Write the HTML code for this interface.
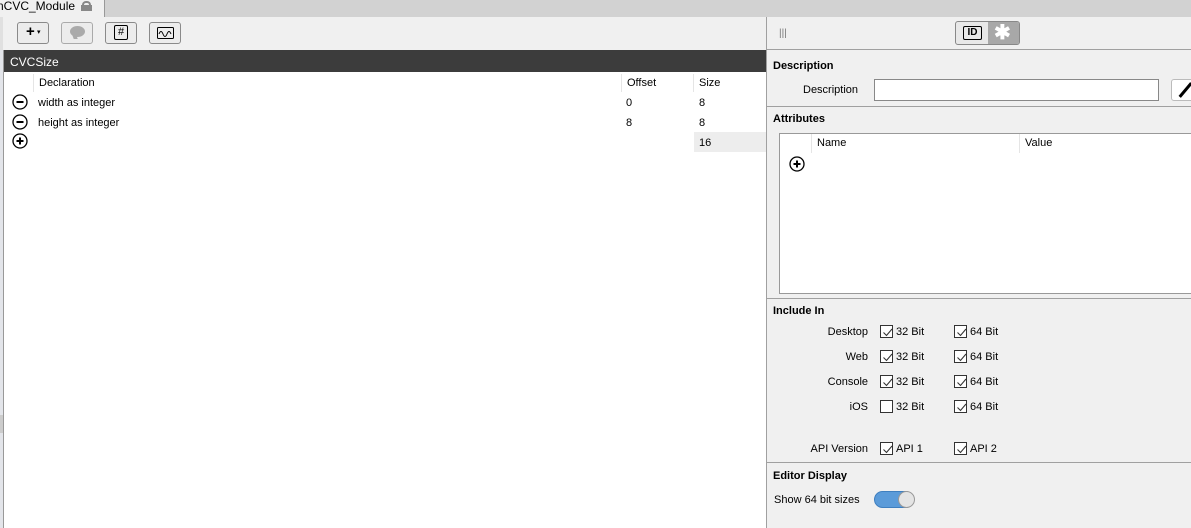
<!DOCTYPE html>
<html><head><meta charset="utf-8"><style>
*{box-sizing:border-box;margin:0;padding:0}
body{width:1191px;height:528px;overflow:hidden;background:#f0f0f0;font-family:"Liberation Sans",sans-serif;font-size:11px;line-height:15px;color:#000;position:relative}
.a{position:absolute}
.btn{position:absolute;top:22px;height:22px;border:1px solid #8a8a8a;border-radius:3px;background:#ececec}
.cb{position:absolute;width:13px;height:13px;border:1px solid #333;background:#fff}
.cb svg{position:absolute;left:1px;top:1px}
.lbl{position:absolute;text-align:right;width:100px}
.b{font-weight:bold}
</style></head><body>
<div class="a" style="left:0;top:0;width:1191px;height:17px;background:#d2d2d2"></div>
<div class="a" style="left:0;top:0;width:105px;height:17px;background:#f0f0f0;border-right:1px solid #999"></div>
<div class="a" style="left:-3px;top:0;font-size:12px;line-height:13px">nCVC_Module</div>
<div class="a" style="left:82px;top:1px;width:9px;height:5px;border:2px solid #888;border-bottom:none;border-radius:4px 4px 0 0"></div>
<div class="a" style="left:81px;top:5px;width:11px;height:6px;background:#888"></div>
<div class="a" style="left:0;top:17px;width:3px;height:33px;background:#e0e0e0"></div>
<div class="btn" style="left:17px;width:32px"><span class="a b" style="left:8px;top:1px;font-size:15px">+</span><span class="a" style="left:19px;top:2px;font-size:7px">▾</span></div>
<div class="btn" style="left:61px;width:32px;border-color:#aaa"><div class="a" style="left:8px;top:3px;width:15px;height:11px;border-radius:50%;background:#aaa"></div><div class="a" style="left:11px;top:12px;width:4px;height:4px;background:#aaa;transform:skewX(20deg)"></div></div>
<div class="btn" style="left:105px;width:32px"><div class="a" style="left:8px;top:2px;width:14px;height:15px;border:1.5px solid #000;border-radius:2px;font-size:11px;line-height:12px;text-align:center">#</div></div>
<div class="btn" style="left:149px;width:32px"><svg class="a" style="left:7px;top:4px" width="17" height="12"><rect x="0.5" y="0.5" width="16" height="11" fill="none" stroke="#000" rx="1"/><path d="M2 7 Q4 2 6 7 T10 7 T14 7" fill="none" stroke="#000"/></svg></div>
<div class="a" style="left:0;top:50px;width:4px;height:478px;background:#e3e5ea;border-right:1px solid #999"></div>
<div class="a" style="left:0;top:415px;width:3px;height:18px;background:#ccc"></div>
<div class="a" style="left:4px;top:50px;width:762px;height:478px;background:#fff"></div>
<div class="a" style="left:4px;top:50px;width:762px;height:23px;background:#3c3c3c;color:#fff;font-size:12px;line-height:25px;padding-left:6px">CVCSize</div>
<div class="a" style="left:4px;top:72px;width:762px;height:1px;background:#fff"></div>
<div class="a" style="left:33px;top:74px;width:1px;height:18px;background:#e5e5e5"></div>
<div class="a" style="left:621px;top:74px;width:1px;height:18px;background:#e5e5e5"></div>
<div class="a" style="left:693px;top:74px;width:1px;height:18px;background:#e5e5e5"></div>
<div class="a" style="left:39px;top:76px">Declaration</div>
<div class="a" style="left:627px;top:76px">Offset</div>
<div class="a" style="left:699px;top:76px">Size</div>
<svg class="a" style="left:12px;top:94px" width="16" height="16"><circle cx="8" cy="8" r="7" fill="none" stroke="#000" stroke-width="1.3"/><path d="M4.5 8H11.5" stroke="#000" stroke-width="2"/></svg>
<svg class="a" style="left:12px;top:114px" width="16" height="16"><circle cx="8" cy="8" r="7" fill="none" stroke="#000" stroke-width="1.3"/><path d="M4.5 8H11.5" stroke="#000" stroke-width="2"/></svg>
<svg class="a" style="left:12px;top:133px" width="16" height="16"><circle cx="8" cy="8" r="7" fill="none" stroke="#000" stroke-width="1.3"/><path d="M4.5 8H11.5M8 4.5V11.5" stroke="#000" stroke-width="2"/></svg>
<div class="a" style="left:38px;top:96px">width as integer</div>
<div class="a" style="left:38px;top:116px">height as integer</div>
<div class="a" style="left:626px;top:96px">0</div><div class="a" style="left:699px;top:96px">8</div>
<div class="a" style="left:626px;top:116px">8</div><div class="a" style="left:699px;top:116px">8</div>
<div class="a" style="left:694px;top:132px;width:72px;height:20px;background:#ededed"></div>
<div class="a" style="left:699px;top:136px">16</div>
<div class="a" style="left:766px;top:17px;width:1px;height:511px;background:#a0a0a0"></div>
<div class="a" style="left:767px;top:49px;width:424px;height:1px;background:#a0a0a0"></div>
<div class="a" style="left:779px;top:26px;color:#777;font-size:10px">|||</div>
<div class="a" style="left:955px;top:21px;width:65px;height:24px;border:1px solid #888;border-radius:3px;background:#e8e8e8;overflow:hidden">
<div class="a" style="left:32px;top:0;width:33px;height:24px;background:#a8a8a8"></div>
<div class="a b" style="left:7px;top:4px;width:19px;height:14px;border:1.5px solid #000;border-radius:2px;font-size:10px;line-height:11px;text-align:center">ID</div>
<div class="a b" style="left:38px;top:1px;color:#fff;font-size:20px;line-height:20px">✱</div></div>
<div class="a b" style="left:773px;top:59px">Description</div>
<div class="a" style="left:803px;top:83px">Description</div>
<div class="a" style="left:874px;top:79px;width:285px;height:22px;border:1px solid #888;background:#fff"></div>
<div class="a" style="left:1171px;top:79px;width:30px;height:22px;border:1px solid #bbb;border-radius:3px;background:#fff"></div>
<div class="a" style="left:1184px;top:81px;width:3px;height:18px;background:#000;transform:rotate(40deg)"></div>
<div class="a" style="left:767px;top:106px;width:424px;height:1px;background:#a0a0a0"></div>
<div class="a b" style="left:773px;top:112px">Attributes</div>
<div class="a" style="left:779px;top:133px;width:420px;height:161px;border:1px solid #999;background:#fff"></div>
<div class="a" style="left:811px;top:134px;width:1px;height:19px;background:#e5e5e5"></div>
<div class="a" style="left:1019px;top:134px;width:1px;height:19px;background:#e5e5e5"></div>
<div class="a" style="left:817px;top:136px">Name</div>
<div class="a" style="left:1025px;top:136px">Value</div>
<svg class="a" style="left:789px;top:156px" width="16" height="16"><circle cx="8" cy="8" r="7" fill="none" stroke="#000" stroke-width="1.3"/><path d="M4.5 8H11.5M8 4.5V11.5" stroke="#000" stroke-width="2"/></svg>
<div class="a" style="left:767px;top:298px;width:424px;height:1px;background:#a0a0a0"></div>
<div class="a b" style="left:773px;top:304px">Include In</div>
<div class="lbl" style="left:768px;top:325px">Desktop</div>
<div class="lbl" style="left:768px;top:350px">Web</div>
<div class="lbl" style="left:768px;top:375px">Console</div>
<div class="lbl" style="left:768px;top:400px">iOS</div>
<div class="lbl" style="left:768px;top:442px">API Version</div>
<div class="a" style="left:767px;top:462px;width:424px;height:1px;background:#a0a0a0"></div>
<div class="a b" style="left:773px;top:469px">Editor Display</div>
<div class="a" style="left:774px;top:493px">Show 64 bit sizes</div>
<div class="a" style="left:874px;top:491px;width:40px;height:17px;border-radius:9px;background:#5b9bd9;border:1px solid #3f7fbf"></div>
<div class="a" style="left:898px;top:491px;width:17px;height:17px;border-radius:50%;background:#e4e4e4;border:1px solid #999"></div>
<div class="cb" style="left:880px;top:325px"><svg width="11" height="11"><path d="M1.5 5.5L4.5 8.5L10 2" fill="none" stroke="#333" stroke-width="1.1"/></svg></div>
<div class="a" style="left:896px;top:325px">32 Bit</div>
<div class="cb" style="left:954px;top:325px"><svg width="11" height="11"><path d="M1.5 5.5L4.5 8.5L10 2" fill="none" stroke="#333" stroke-width="1.1"/></svg></div>
<div class="a" style="left:970px;top:325px">64 Bit</div>
<div class="cb" style="left:880px;top:350px"><svg width="11" height="11"><path d="M1.5 5.5L4.5 8.5L10 2" fill="none" stroke="#333" stroke-width="1.1"/></svg></div>
<div class="a" style="left:896px;top:350px">32 Bit</div>
<div class="cb" style="left:954px;top:350px"><svg width="11" height="11"><path d="M1.5 5.5L4.5 8.5L10 2" fill="none" stroke="#333" stroke-width="1.1"/></svg></div>
<div class="a" style="left:970px;top:350px">64 Bit</div>
<div class="cb" style="left:880px;top:375px"><svg width="11" height="11"><path d="M1.5 5.5L4.5 8.5L10 2" fill="none" stroke="#333" stroke-width="1.1"/></svg></div>
<div class="a" style="left:896px;top:375px">32 Bit</div>
<div class="cb" style="left:954px;top:375px"><svg width="11" height="11"><path d="M1.5 5.5L4.5 8.5L10 2" fill="none" stroke="#333" stroke-width="1.1"/></svg></div>
<div class="a" style="left:970px;top:375px">64 Bit</div>
<div class="cb" style="left:880px;top:400px"></div>
<div class="a" style="left:896px;top:400px">32 Bit</div>
<div class="cb" style="left:954px;top:400px"><svg width="11" height="11"><path d="M1.5 5.5L4.5 8.5L10 2" fill="none" stroke="#333" stroke-width="1.1"/></svg></div>
<div class="a" style="left:970px;top:400px">64 Bit</div>
<div class="cb" style="left:880px;top:442px"><svg width="11" height="11"><path d="M1.5 5.5L4.5 8.5L10 2" fill="none" stroke="#333" stroke-width="1.1"/></svg></div>
<div class="a" style="left:896px;top:442px">API 1</div>
<div class="cb" style="left:954px;top:442px"><svg width="11" height="11"><path d="M1.5 5.5L4.5 8.5L10 2" fill="none" stroke="#333" stroke-width="1.1"/></svg></div>
<div class="a" style="left:970px;top:442px">API 2</div>
</body></html>
